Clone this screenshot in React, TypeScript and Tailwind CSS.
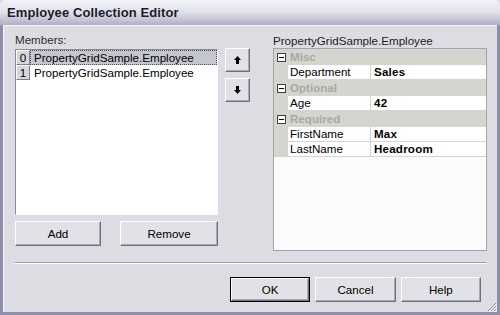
import type { ReactNode } from "react";

type Prop = { name: string; value: string };
type Category = { title: string; props: Prop[] };

const categories: Category[] = [
  { title: "Misc", props: [{ name: "Department", value: "Sales" }] },
  { title: "Optional", props: [{ name: "Age", value: "42" }] },
  {
    title: "Required",
    props: [
      { name: "FirstName", value: "Max" },
      { name: "LastName", value: "Headroom" },
    ],
  },
];

const members = ["PropertyGridSample.Employee", "PropertyGridSample.Employee"];

function Btn({
  children,
  className = "",
  isDefault = false,
}: {
  children: ReactNode;
  className?: string;
  isDefault?: boolean;
}) {
  const face = (
    <div className="flex h-full w-full items-center justify-center border border-b-[#70707a] border-l-white border-r-[#70707a] border-t-white bg-[#e1e1e7] shadow-[inset_-1px_-1px_0_#a9a9b3]">
      {children}
    </div>
  );
  return isDefault ? (
    <div className={`border border-black ${className}`}>{face}</div>
  ) : (
    <div className={className}>{face}</div>
  );
}

function Arrow({ up }: { up: boolean }) {
  return (
    <svg width="7" height="8" viewBox="0 0 7 8" className={up ? "" : "rotate-180"}>
      <path d="M3.5 0 L7 4 L5 4 L5 8 L2 8 L2 4 L0 4 Z" fill="#000" />
    </svg>
  );
}

function MinusBox() {
  return (
    <div className="flex h-[9px] w-[9px] items-center justify-center border border-[#404040] bg-white">
      <div className="h-px w-[5px] bg-black" />
    </div>
  );
}

export default function App() {
  return (
    <div className="flex h-[315px] w-[500px] flex-col bg-[#dcdce2] font-['Liberation_Sans',Arial,sans-serif] text-[11.6px] text-black">
      {/* title bar */}
      <div className="flex h-[27px] items-center rounded-tl-[6px] rounded-tr-[6px] bg-gradient-to-b from-[#f2f2f8] via-[#e0e0ea] to-[#b0b0c4] pl-[7px]">
        <span className="text-[13px] font-bold tracking-[0.1px] text-[#1c1c2c]">
          Employee Collection Editor
        </span>
      </div>

      <div className="flex flex-1 flex-col border-x-[3px] border-b-[3px] border-[#8e8eaa]">
        <div className="flex flex-1 flex-col border-l border-t border-white/70 pt-[6px]">
          <div className="flex">
            {/* members column */}
            <div className="ml-[11px] flex w-[203px] flex-col">
              <div className="h-[17px] leading-[15px] text-[#2c2c2c]">Members:</div>
              <div className="h-[166px] border border-b-white border-l-[#8a8a94] border-r-white border-t-[#8a8a94] bg-white">
                {members.map((m, i) => (
                  <div key={i} className="flex h-[15px]">
                    <div className="flex w-[14px] items-center justify-center border border-b-[#808088] border-l-white border-r-[#808088] border-t-white bg-[#d6d6dc] leading-none">
                      {i}
                    </div>
                    <div
                      className={`flex flex-1 items-center pl-[3px] ${
                        i === 0 ? "border border-dotted border-[#505058] bg-[#c6c6ce]" : "pl-[4px]"
                      }`}
                    >
                      {m}
                    </div>
                  </div>
                ))}
              </div>
              <div className="mt-[6px] flex justify-between">
                <Btn className="h-[25px] w-[86px]">Add</Btn>
                <Btn className="h-[25px] w-[98px]">Remove</Btn>
              </div>
            </div>

            {/* arrows */}
            <div className="ml-[7px] mt-[16px] flex flex-col gap-[6px]">
              <Btn className="h-[24px] w-[25px]">
                <Arrow up />
              </Btn>
              <Btn className="h-[24px] w-[25px]">
                <Arrow up={false} />
              </Btn>
            </div>

            {/* property grid */}
            <div className="ml-[23px] flex w-[214px] flex-col">
              <div className="relative h-[16px] overflow-hidden leading-[13px] text-[#1c1c1c]">
                <div className="mt-[2px]">PropertyGridSample.Employee</div>
                <div className="text-[#1c1c1c]">Properties</div>
              </div>
              <div className="flex h-[203px] flex-col border border-[#a4a4ac] bg-[#fbfbfb]">
                {categories.map((c) => (
                  <div key={c.title}>
                    <div className="flex h-[16px] items-center bg-[#d5d5cf]">
                      <div className="flex w-[14px] justify-center">
                        <MinusBox />
                      </div>
                      <span className="ml-[2px] font-bold text-[#a9a9a1]">{c.title}</span>
                    </div>
                    {c.props.map((p) => (
                      <div key={p.name} className="flex h-[15px]">
                        <div className="w-[14px] bg-[#d5d5cf]" />
                        <div className="flex w-[83px] items-center border-b border-r border-[#d4d4d4] bg-white pl-[2px]">
                          {p.name}
                        </div>
                        <div className="flex flex-1 items-center border-b border-[#d4d4d4] bg-white pl-[3px] font-bold tracking-[0.2px]">
                          {p.value}
                        </div>
                      </div>
                    ))}
                  </div>
                ))}
              </div>
            </div>
          </div>

          {/* separator */}
          <div className="ml-[11px] mt-[11px] w-[471px] border-b border-t border-b-white border-t-[#9c9ca6]" />

          {/* bottom buttons */}
          <div className="ml-[226px] mt-[13px] flex gap-[5px]">
            <Btn isDefault className="h-[25px] w-[82px]">
              OK
            </Btn>
            <Btn className="h-[25px] w-[82px]">Cancel</Btn>
            <Btn className="h-[25px] w-[82px]">Help</Btn>
            <div className="ml-[1px] mt-[25px] flex items-end">
              <svg width="10" height="10" viewBox="0 0 10 10">
                <path d="M9 1 L1 9 M9 4 L4 9 M9 7 L7 9" stroke="#8a8a96" strokeWidth="1" />
                <path d="M10 2 L2 10 M10 5 L5 10 M10 8 L8 10" stroke="#ffffff" strokeWidth="1" />
              </svg>
            </div>
          </div>
        </div>
      </div>
    </div>
  );
}
